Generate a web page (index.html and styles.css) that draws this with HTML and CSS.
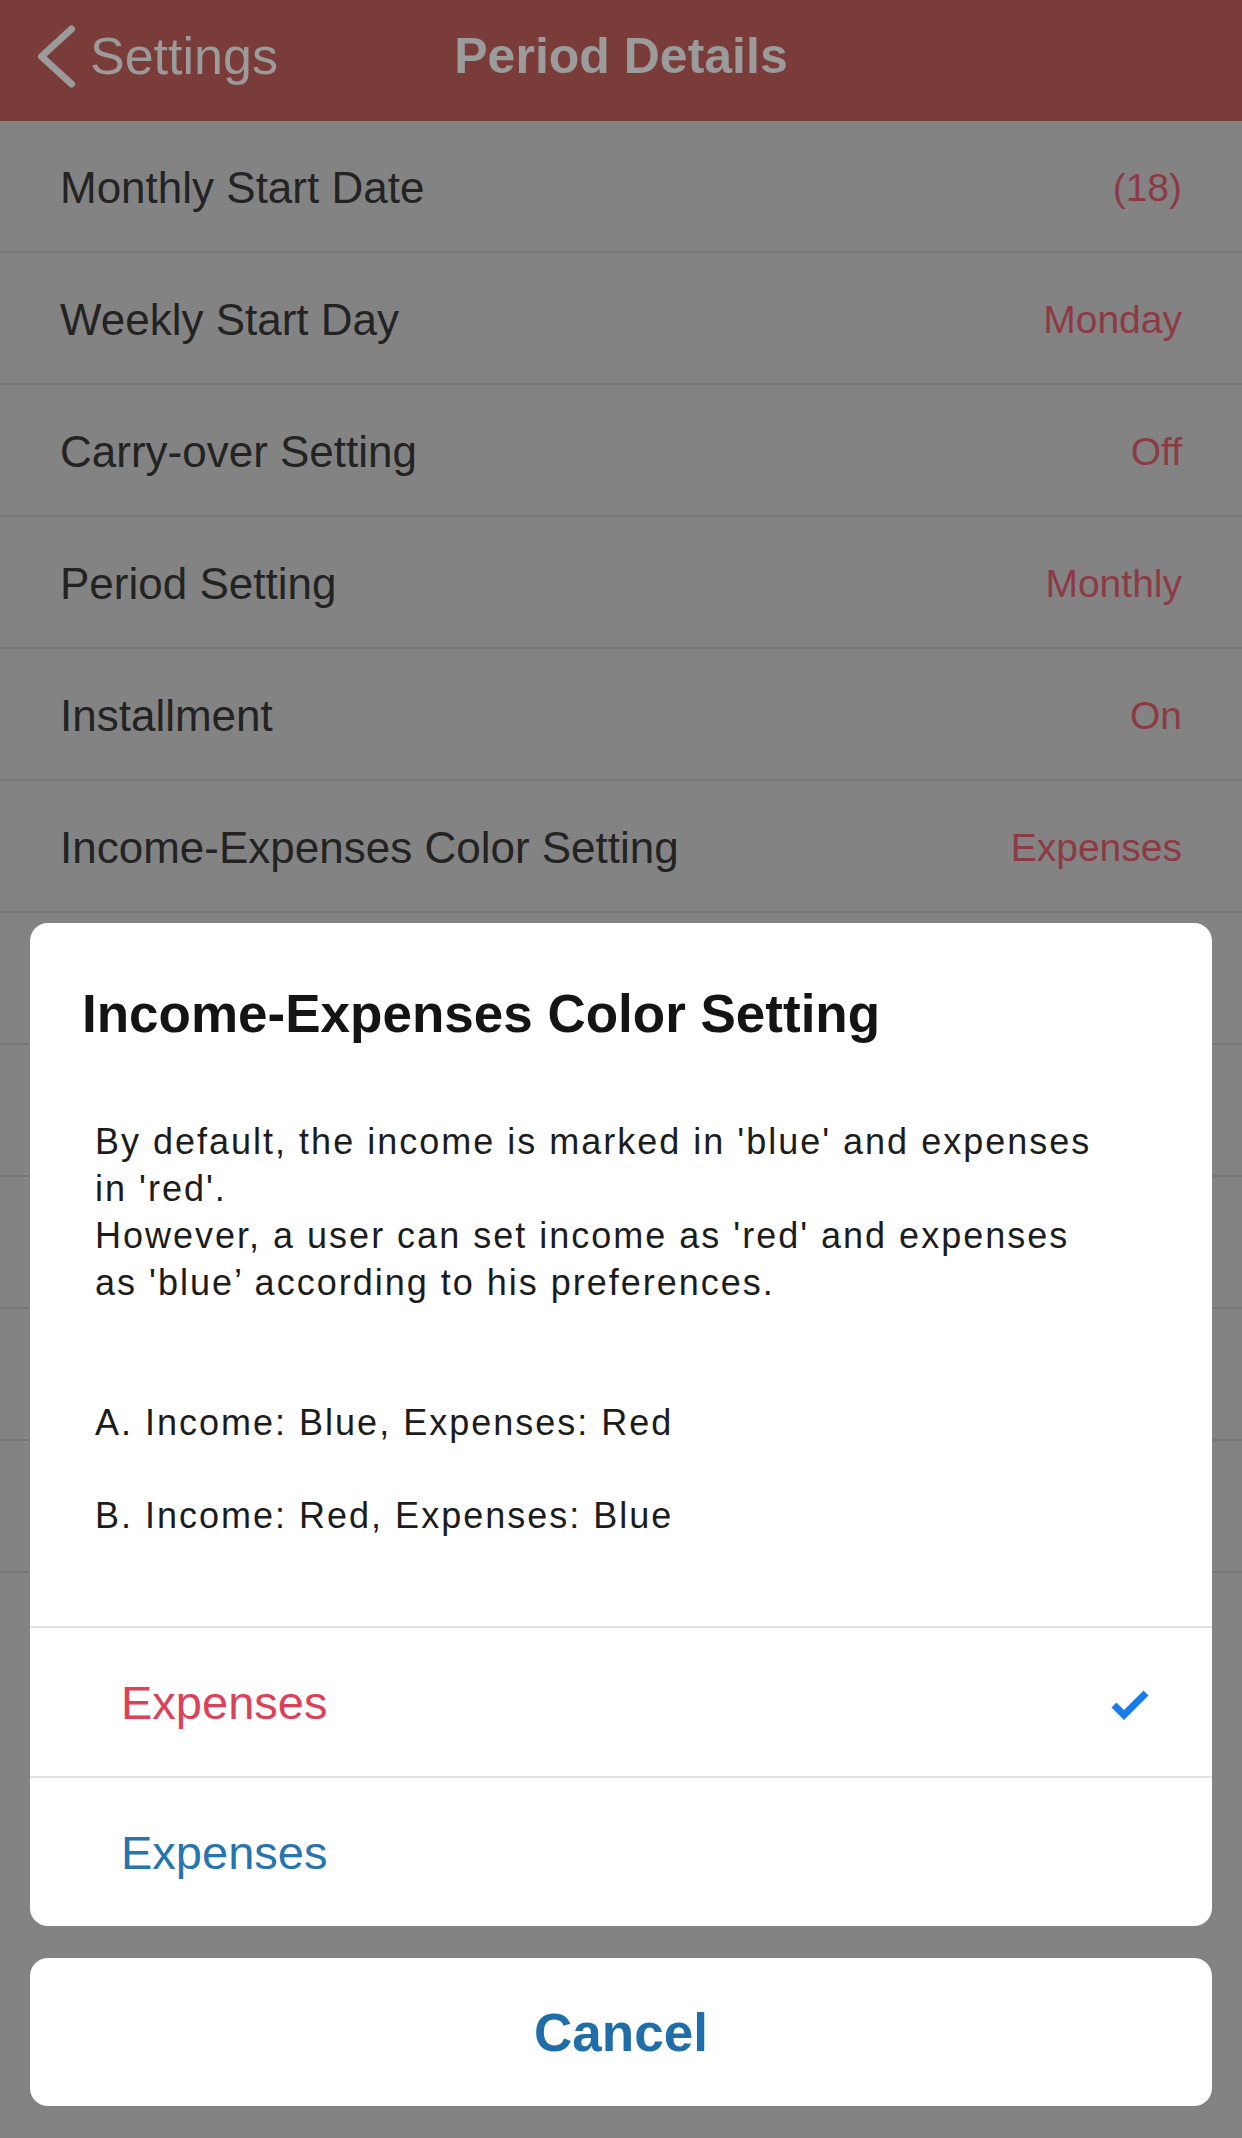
FILE: index.html
```html
<!DOCTYPE html>
<html lang="en">

<head>
  <meta charset="UTF-8">
  <meta name="viewport" content="width=device-width, initial-scale=1.0">
  <title>Period Details</title>
  <link rel="stylesheet" href="styles.css">
</head>

<body>
  <header class="nav-bar">
    <a class="back" href="#">
      <svg width="44" height="68" viewBox="0 0 44 68">
        <path d="M37.5 7 L7.5 34.5 L37.5 62" />
      </svg>
      <span>Settings</span>
    </a>
    <h1>Period Details</h1>
    <span></span>
  </header>

  <ul class="settings-list">
    <li class="row"><span class="row-label">Monthly Start Date</span><span class="row-value">(18)</span></li>
    <li class="row"><span class="row-label">Weekly Start Day</span><span class="row-value">Monday</span></li>
    <li class="row"><span class="row-label">Carry-over Setting</span><span class="row-value">Off</span></li>
    <li class="row"><span class="row-label">Period Setting</span><span class="row-value">Monthly</span></li>
    <li class="row"><span class="row-label">Installment</span><span class="row-value">On</span></li>
    <li class="row"><span class="row-label">Income-Expenses Color Setting</span><span class="row-value">Expenses</span></li>
    <!-- rows hidden behind the sheet -->
    <li class="row"></li>
    <li class="row"></li>
    <li class="row"></li>
    <li class="row"></li>
    <li class="row"></li>
  </ul>

  <!-- Action sheet over the dimmed page -->
  <div class="action-sheet">
    <div class="sheet-card">
      <div class="sheet-info">
        <h2>Income-Expenses Color Setting</h2>
        <p class="info-text">By default, the income is marked in 'blue' and expenses<br>in 'red'.<br>However, a user can set income as 'red' and expenses<br>as 'blue’ according to his preferences.</p>
        <p class="info-text choice-a">A. Income: Blue, Expenses: Red</p>
        <p class="info-text choice-b">B. Income: Red, Expenses: Blue</p>
      </div>
      <div class="option option-red">
        <span>Expenses</span>
        <svg class="check" width="44" height="38" viewBox="0 0 44 38">
          <path d="M7 22 L17 32 L39 10" />
        </svg>
      </div>
      <div class="option option-blue">
        <span>Expenses</span>
      </div>
    </div>
    <button class="cancel-btn">Cancel</button>
  </div>
</body>

</html>
```

FILE: styles.css
```css
/* Basic styling */
body {
  margin: 0;
  width: 1242px;
  height: 2138px;
  overflow: hidden;
  font-family: "Liberation Sans", Arial, sans-serif;
  background-color: #838383;
  color: #232323;
}

/* Top bar (dimmed) */
.nav-bar {
  display: grid;
  grid-template-columns: 1fr auto 1fr;
  align-items: center;
  height: 121px;
  padding-bottom: 10px;
  box-sizing: border-box;
  background-color: #7a3c39;
}

.back {
  display: flex;
  align-items: center;
  gap: 12px;
  padding-left: 34px;
  color: #9b9b9b;
  text-decoration: none;
  font-size: 52px;
  line-height: 1;
}

.back svg path {
  fill: none;
  stroke: #9b9b9b;
  stroke-width: 7;
  stroke-linecap: round;
  stroke-linejoin: round;
}

.nav-bar h1 {
  margin: 0;
  font-size: 50px;
  font-weight: bold;
  line-height: 1;
  color: #9b9b9b;
}

/* Settings rows */
.settings-list {
  list-style: none;
  margin: 0;
  padding: 0;
}

.row {
  display: flex;
  justify-content: space-between;
  align-items: center;
  height: 132px;
  box-sizing: border-box;
  padding: 4px 60px 0 60px;
  border-bottom: 2px solid #777;
}

.row-label {
  font-size: 44px;
}

.row-value {
  font-size: 39px;
  color: #8c3b45;
}

/* Action sheet */
.action-sheet {
  position: fixed;
  left: 30px;
  right: 30px;
  bottom: 32px;
}

.sheet-card {
  background-color: #fff;
  border-radius: 18px;
  overflow: hidden;
}

.sheet-info {
  padding: 59px 0 87px 0;
}

.sheet-info h2 {
  margin: 0;
  padding-left: 52px;
  font-size: 53px;
  line-height: 64px;
  font-weight: bold;
  color: #141414;
}

.info-text {
  margin: 72px 0 0 0;
  padding-left: 65px;
  font-size: 36px;
  line-height: 47px;
  letter-spacing: 2px;
  white-space: nowrap;
  color: #1c1c1c;
}

.choice-a {
  margin-top: 93px;
}

.choice-b {
  margin-top: 46px;
}

.option {
  display: flex;
  justify-content: space-between;
  align-items: center;
  height: 150px;
  box-sizing: border-box;
  padding: 0 61px 0 91px;
  border-top: 2px solid #e2e2e2;
  font-size: 47px;
}

.option-red {
  color: #dc4257;
}

.option-blue {
  color: #2675ae;
}

.check path {
  fill: none;
  stroke: #1a7bea;
  stroke-width: 7;
}

.cancel-btn {
  display: block;
  width: 100%;
  height: 148px;
  margin-top: 32px;
  border: none;
  border-radius: 18px;
  background-color: #fff;
  font-family: inherit;
  font-size: 53px;
  font-weight: bold;
  color: #1f6ea9;
  padding: 0;
}
```
